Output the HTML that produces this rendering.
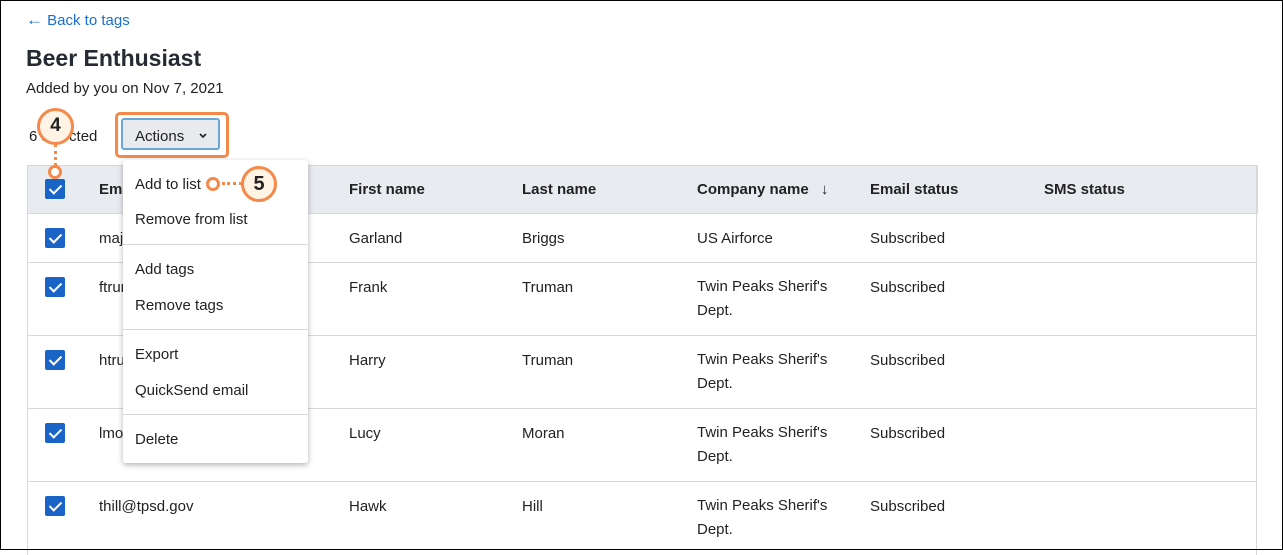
<!DOCTYPE html><html><head><style>
body{margin:0;width:1283px;height:550px;overflow:hidden;font-family:"Liberation Sans",sans-serif;color:#222;background:#fff;position:relative}
.frame{position:absolute;left:0;top:0;width:1281px;height:548px;border:1px solid #000;z-index:10;pointer-events:none}
.a{position:absolute;white-space:nowrap}
.t{font-size:15px}
.cb{position:absolute;left:45px;width:20px;height:20px;background:#1a64c8;border-radius:2px}
.cb:after{content:"";position:absolute;left:7px;top:3px;width:5px;height:10px;border:solid #fff;border-width:0 2px 2px 0;transform:rotate(45deg)}
.hl{position:absolute;left:27px;width:1230px;height:1px;background:#d5d9de}
.mi{position:absolute;left:135px;font-size:15px;color:#222}
.md{position:absolute;left:123px;width:185px;height:1px;background:#d5d9de}
.oc{position:absolute;border:3px solid #f4894a;border-radius:50%;background:#fff3e6;box-sizing:border-box}
</style></head><body>
<div class="frame"></div>
<div class="a" style="left:26px;top:10px;font-size:15px;color:#1a6fd0"><span style="font-size:17px">←</span> Back to tags</div>
<div class="a" style="left:26px;top:45px;font-size:23px;font-weight:bold;color:#262b33">Beer Enthusiast</div>
<div class="a t" style="left:26px;top:80px">Added by you on Nov 7, 2021</div>
<div class="a t" style="left:29px;top:128px">6 selected</div>
<div class="a" style="left:115px;top:112px;width:108px;height:40px;border:3px solid #f4894a;border-radius:5px"></div>
<div class="a" style="left:121px;top:118px;width:99px;height:32px;border:2px solid #6aa7d8;border-radius:3px;background:#e8eaed;box-sizing:border-box"></div>
<div class="a t" style="left:135px;top:128px">Actions</div>
<svg class="a" style="left:198px;top:132px" width="10" height="8" viewBox="0 0 10 8"><path d="M2 2 L5 5 L8 2" stroke="#222" stroke-width="1.6" fill="none"/></svg>
<div class="a" style="left:27px;top:165px;width:1229px;height:48px;background:#e8ebef;border:1px solid #d5d9de;border-bottom:none"></div>
<div class="hl" style="top:213px"></div><div class="hl" style="top:262px"></div><div class="hl" style="top:335px"></div><div class="hl" style="top:408px"></div><div class="hl" style="top:481px"></div>
<div style="position:absolute;left:27px;top:165px;width:1px;height:390px;background:#d5d9de"></div>
<div style="position:absolute;left:1256px;top:165px;width:1px;height:390px;background:#d5d9de"></div>
<div class="cb" style="top:179px"></div>
<div class="a t" style="left:99px;top:181px;font-weight:bold">Email</div>
<div class="a t" style="left:349px;top:181px;font-weight:bold">First name</div>
<div class="a t" style="left:522px;top:181px;font-weight:bold">Last name</div>
<div class="a t" style="left:697px;top:181px;font-weight:bold">Company name <span style="margin-left:8px">↓</span></div>
<div class="a t" style="left:870px;top:181px;font-weight:bold">Email status</div>
<div class="a t" style="left:1044px;top:181px;font-weight:bold">SMS status</div>

<div class="cb" style="top:228px"></div><div class="a t" style="left:99px;top:230px">majors@usaf.gov</div><div class="a t" style="left:349px;top:230px">Garland</div><div class="a t" style="left:522px;top:230px">Briggs</div><div class="a t" style="left:697px;top:230px">US Airforce</div><div class="a t" style="left:870px;top:230px">Subscribed</div>
<div class="cb" style="top:277px"></div><div class="a t" style="left:99px;top:279px">ftruman@tpsd.gov</div><div class="a t" style="left:349px;top:279px">Frank</div><div class="a t" style="left:522px;top:279px">Truman</div><div class="a t" style="left:697px;top:279px;line-height:24px;margin-top:-4px">Twin Peaks Sherif's<br>Dept.</div><div class="a t" style="left:870px;top:279px">Subscribed</div>
<div class="cb" style="top:350px"></div><div class="a t" style="left:99px;top:352px">htruman@tpsd.gov</div><div class="a t" style="left:349px;top:352px">Harry</div><div class="a t" style="left:522px;top:352px">Truman</div><div class="a t" style="left:697px;top:348px;line-height:24px">Twin Peaks Sherif's<br>Dept.</div><div class="a t" style="left:870px;top:352px">Subscribed</div>
<div class="cb" style="top:423px"></div><div class="a t" style="left:99px;top:425px">lmoran@tpsd.gov</div><div class="a t" style="left:349px;top:425px">Lucy</div><div class="a t" style="left:522px;top:425px">Moran</div><div class="a t" style="left:697px;top:421px;line-height:24px">Twin Peaks Sherif's<br>Dept.</div><div class="a t" style="left:870px;top:425px">Subscribed</div>
<div class="cb" style="top:496px"></div><div class="a t" style="left:99px;top:498px">thill@tpsd.gov</div><div class="a t" style="left:349px;top:498px">Hawk</div><div class="a t" style="left:522px;top:498px">Hill</div><div class="a t" style="left:697px;top:494px;line-height:24px">Twin Peaks Sherif's<br>Dept.</div><div class="a t" style="left:870px;top:498px">Subscribed</div>

<div class="a" style="left:123px;top:160px;width:185px;height:303px;background:#fff;border-radius:3px;box-shadow:0 2px 6px rgba(0,0,0,.3)"></div>
<div class="mi" style="top:176px">Add to list</div>
<div class="mi" style="top:211px">Remove from list</div>
<div class="md" style="top:244px"></div>
<div class="mi" style="top:261px">Add tags</div>
<div class="mi" style="top:297px">Remove tags</div>
<div class="md" style="top:329px"></div>
<div class="mi" style="top:346px">Export</div>
<div class="mi" style="top:382px">QuickSend email</div>
<div class="md" style="top:414px"></div>
<div class="mi" style="top:431px">Delete</div>

<div class="a" style="left:54px;top:144px;height:22px;border-left:3px dotted #f4894a"></div>
<div class="oc" style="left:37px;top:108px;width:37px;height:37px"></div>
<div class="a" style="left:37px;top:115px;width:37px;text-align:center;font-size:19px;font-weight:bold">4</div>
<div class="oc" style="left:48px;top:165px;width:14px;height:14px;background:#fff"></div>
<div class="a" style="left:222px;top:182px;width:20px;border-top:3px dotted #f4894a"></div>
<div class="oc" style="left:206px;top:177px;width:14px;height:14px;background:#fff"></div>
<div class="oc" style="left:241px;top:166px;width:36px;height:36px"></div>
<div class="a" style="left:241px;top:173px;width:36px;text-align:center;font-size:20px;font-weight:bold">5</div>
</body></html>
